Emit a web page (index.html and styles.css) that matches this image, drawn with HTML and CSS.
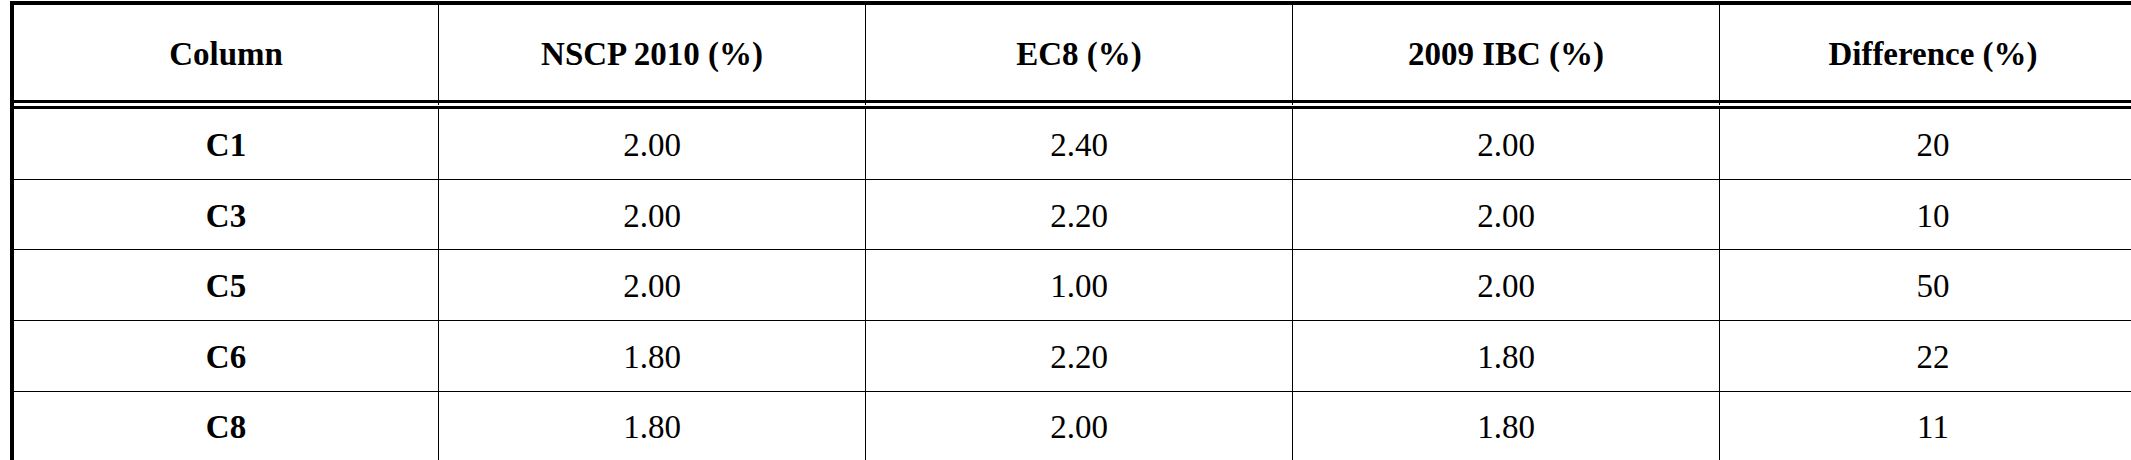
FILE: index.html
```html
<!DOCTYPE html>
<html>
<head>
<meta charset="utf-8">
<link rel="stylesheet" href="styles.css">
</head>
<body>
<table class="grid">
  <colgroup>
    <col class="c1">
    <col class="cn">
    <col class="cn">
    <col class="cn">
    <col class="cn">
  </colgroup>
  <thead>
    <tr>
      <th>Column</th>
      <th>NSCP 2010 (%)</th>
      <th>EC8 (%)</th>
      <th>2009 IBC (%)</th>
      <th>Difference (%)</th>
    </tr>
  </thead>
  <tbody>
    <tr><td class="key">C1</td><td>2.00</td><td>2.40</td><td>2.00</td><td>20</td></tr>
    <tr><td class="key">C3</td><td>2.00</td><td>2.20</td><td>2.00</td><td>10</td></tr>
    <tr><td class="key">C5</td><td>2.00</td><td>1.00</td><td>2.00</td><td>50</td></tr>
    <tr><td class="key">C6</td><td>1.80</td><td>2.20</td><td>1.80</td><td>22</td></tr>
    <tr><td class="key">C8</td><td>1.80</td><td>2.00</td><td>1.80</td><td>11</td></tr>
  </tbody>
</table>
</body>
</html>
```
FILE: styles.css
```css
html {
  overflow: hidden;
}
html, body {
  margin: 0;
  padding: 0;
  background: #ffffff;
}
body {
  width: 2200px;
  height: 460px;
}
.grid {
  margin: 1px 0 0 10px;
  width: 2137px;
  table-layout: fixed;
  border-collapse: separate;
  border-spacing: 0;
  border-left: 4px solid #000;
  border-top: 4px solid #000;
  font-family: "Liberation Serif", "Times New Roman", serif;
  font-size: 33px;
  color: #000;
}
.c1 {
  width: 425px;
}
.cn {
  width: 427px;
}
.grid th,
.grid td {
  box-sizing: border-box;
  padding: 0;
  text-align: center;
  vertical-align: middle;
  border-right: 1px solid #000;
  border-bottom: 1px solid #000;
  line-height: 1.15;
}
.grid th {
  font-weight: bold;
  height: 104px;
  padding-top: 5px;
  border-bottom: 9px double #000;
}
.grid td {
  font-weight: normal;
  height: 70.67px;
  padding-top: 4px;
}
.grid td.key {
  font-weight: bold;
}
```
